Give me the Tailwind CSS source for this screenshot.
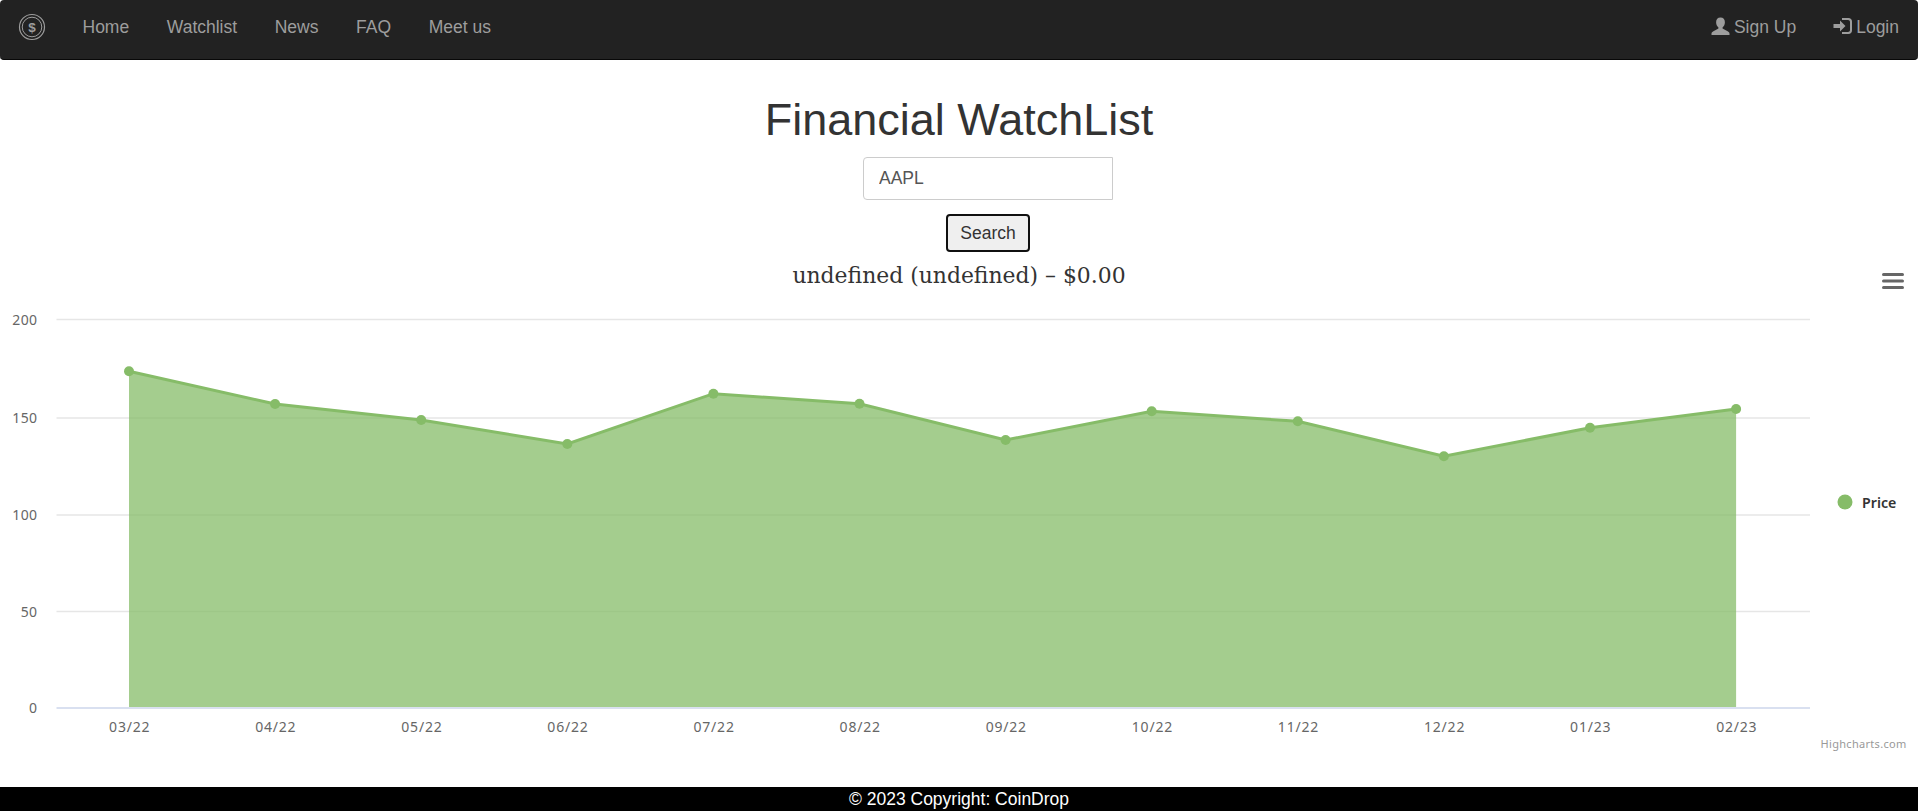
<!DOCTYPE html>
<html lang="en">
<head>
  <meta charset="UTF-8">
  <meta name="viewport" content="width=device-width, initial-scale=1.0">
  <title>Financial WatchList</title>
  <script src="https://cdn.jsdelivr.net/npm/@tailwindcss/browser@4"></script>
</head>
<body class="bg-white text-[#333] font-['Liberation_Sans',Arial,sans-serif] text-[17.5px]">
  <div class="flex flex-col h-[811px] overflow-hidden">
    <!-- navbar -->
    <nav class="h-[60px] shrink-0 flex items-center justify-between bg-[#222] border-b border-[#080808] rounded-[4px] pb-[5px] text-[#9d9d9d]">
      <div class="flex items-center">
        <svg class="ml-[18px] mr-[18px] w-[28px] h-[28px]" viewBox="0 0 28 28" fill="none" stroke="#9d9d9d">
          <circle cx="14" cy="14" r="12.5" stroke-width="1.2"/>
          <circle cx="14" cy="14" r="9.8" stroke-width="1"/>
          <text x="14" y="18.6" text-anchor="middle" font-size="13.5" font-weight="700" fill="#9d9d9d" stroke="none" font-family="Liberation Sans">$</text>
        </svg>
        <a href="#" class="pl-[18.5px] pr-[18.8px]">Home</a>
        <a href="#" class="px-[18.8px]">Watchlist</a>
        <a href="#" class="px-[18.8px]">News</a>
        <a href="#" class="px-[18.8px]">FAQ</a>
        <a href="#" class="px-[18.8px]">Meet us</a>
      </div>
      <div class="flex items-center pr-[19px]">
        <a href="#" class="flex items-center mr-[37px]">
          <svg class="w-[19px] h-[19px] mr-[4px] mb-[2px]" viewBox="0 0 19 19" fill="#9d9d9d"><path d="M9.5 .5c2.8 0 4.4 2 4.4 4.7 0 2-.9 4-2.1 5-.4.4-.4 1.2.2 1.6l4.6 2.4c1 .5 1.9 1.2 1.9 2.3v1.5H.5v-1.5c0-1.100.9-1.800 1.900-2.300l4.600-2.400c.6-.4.6-1.200.2-1.600-1.200-1-2.100-3-2.100-5 0-2.700 1.600-4.700 4.400-4.700z"/></svg>
          Sign Up
        </a>
        <a href="#" class="flex items-center">
          <svg class="w-[20px] h-[19px] mr-[3px] mb-[2px]" viewBox="0 0 20 19" fill="#9d9d9d"><path d="M7 3.5l5.5 5.5L7 14.5v-3.5H.5V7H7z"/><path d="M9 1h6.500c2 0 3.500 1.500 3.500 3.500v9c0 2-1.500 3.500-3.500 3.500H9v-2h6c1.200 0 2-.8 2-2V5c0-1.200-.8-2-2-2H9z"/></svg>
          Login
        </a>
      </div>
    </nav>

    <!-- heading and search -->
    <main class="shrink-0 flex flex-col items-center">
      <h1 class="mt-[35px] text-[45px] leading-[49.5px] font-normal">Financial WatchList</h1>
      <form class="flex flex-col items-center pl-[58px] mt-[12px]">
        <input type="text" value="AAPL" class="w-[250px] h-[43px] px-[15px] bg-white border border-[#ccc] rounded-l-[4px] text-[17.5px] text-[#555]">
        <button type="button" class="mt-[14px] w-[84px] h-[38px] pt-[1px] bg-[#efefef] border-2 border-[#101010] rounded-[4px] text-[17.5px] text-[#333] ring-2 ring-white">Search</button>
      </form>
    </main>

    <!-- chart, viewBox keeps page coordinates -->
    <div class="flex-1 min-h-0">
      <svg class="block w-full h-[535px]" viewBox="0 252 1918 535">
        <text x="959" y="283" text-anchor="middle" font-size="21.9" fill="#333" font-family="DejaVu Serif">undefined (undefined) – $0.00</text>

        <g stroke="#e6e6e6" stroke-width="1.5">
          <line x1="56.5" x2="1810" y1="319.5" y2="319.5"/>
          <line x1="56.5" x2="1810" y1="418" y2="418"/>
          <line x1="56.5" x2="1810" y1="515" y2="515"/>
          <line x1="56.5" x2="1810" y1="611.5" y2="611.5"/>
        </g>
        <line x1="56.5" x2="1810" y1="708" y2="708" stroke="#ccd6eb" stroke-width="1.5"/>

        <g font-family="Noto Sans" font-size="14" fill="#666" text-anchor="end" letter-spacing="0.4">
          <text x="37.5" y="325">200</text>
          <text x="37.5" y="423">150</text>
          <text x="37.5" y="520">100</text>
          <text x="37.5" y="617">50</text>
          <text x="37.5" y="713">0</text>
        </g>

        <path d="M129 371.3 L275.1 404 L421.2 420 L567.3 444 L713.4 393.7 L859.5 403.7 L1005.6 440 L1151.7 411.3 L1297.8 421.3 L1443.9 456.3 L1590 427.7 L1736.1 409 L1736.1 707 L129 707 Z" fill="#86bc68" fill-opacity="0.75"/>
        <path d="M129 371.3 L275.1 404 L421.2 420 L567.3 444 L713.4 393.7 L859.5 403.7 L1005.6 440 L1151.7 411.3 L1297.8 421.3 L1443.9 456.3 L1590 427.7 L1736.1 409" fill="none" stroke="#86bc68" stroke-width="3"/>
        <g fill="#86bc68">
          <circle cx="129" cy="371.3" r="5"/>
          <circle cx="275.1" cy="404" r="5"/>
          <circle cx="421.2" cy="420" r="5"/>
          <circle cx="567.3" cy="444" r="5"/>
          <circle cx="713.4" cy="393.7" r="5"/>
          <circle cx="859.5" cy="403.7" r="5"/>
          <circle cx="1005.6" cy="440" r="5"/>
          <circle cx="1151.7" cy="411.3" r="5"/>
          <circle cx="1297.8" cy="421.3" r="5"/>
          <circle cx="1443.9" cy="456.3" r="5"/>
          <circle cx="1590" cy="427.7" r="5"/>
          <circle cx="1736.1" cy="409" r="5"/>
        </g>

        <g font-family="Noto Sans" font-size="14" fill="#666" text-anchor="middle" letter-spacing="0.8" transform="translate(0.7 0)">
          <text x="129" y="732">03/22</text>
          <text x="275.1" y="732">04/22</text>
          <text x="421.2" y="732">05/22</text>
          <text x="567.3" y="732">06/22</text>
          <text x="713.4" y="732">07/22</text>
          <text x="859.5" y="732">08/22</text>
          <text x="1005.6" y="732">09/22</text>
          <text x="1151.7" y="732">10/22</text>
          <text x="1297.8" y="732">11/22</text>
          <text x="1443.9" y="732">12/22</text>
          <text x="1590" y="732">01/23</text>
          <text x="1736.1" y="732">02/23</text>
        </g>

        <!-- export menu -->
        <g stroke="#666" stroke-width="3" stroke-linecap="round">
          <line x1="1883.5" x2="1902.5" y1="274.5" y2="274.5"/>
          <line x1="1883.5" x2="1902.5" y1="281" y2="281"/>
          <line x1="1883.5" x2="1902.5" y1="287.5" y2="287.5"/>
        </g>

        <circle cx="1845" cy="502" r="7.5" fill="#86bc68"/>
        <text x="1862" y="508" font-family="Noto Sans" font-size="14.2" font-weight="600" fill="#333">Price</text>
        <text x="1906.5" y="748" text-anchor="end" font-family="Noto Sans" font-size="11" fill="#999" letter-spacing="0.3">Highcharts.com</text>
      </svg>
    </div>

    <footer class="h-[24px] shrink-0 bg-black text-white text-center text-[17.5px] leading-[24px]">© 2023 Copyright: CoinDrop</footer>
  </div>
</body>
</html>
